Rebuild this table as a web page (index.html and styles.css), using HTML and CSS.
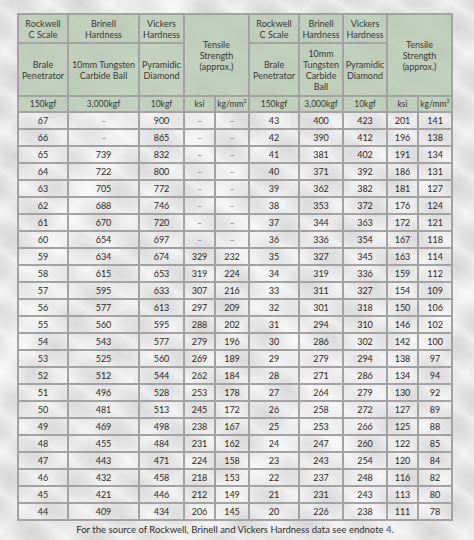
FILE: index.html
```html
<!DOCTYPE html>
<html>
<head>
<meta charset="utf-8">
<link rel="stylesheet" href="styles.css">
</head>
<body>
<div class="page">
<table class="hard">
<colgroup>
<col class="c-rc"><col class="c-br"><col class="c-vk"><col class="c-ksi"><col class="c-kg">
<col class="c-rc"><col class="c-br2"><col class="c-vk2"><col class="c-ksi"><col class="c-kg">
</colgroup>
<thead>
<tr class="h1">
<th>Rockwell<br>C Scale</th><th>Brinell<br>Hardness</th><th>Vickers<br>Hardness</th><th colspan="2" rowspan="2">Tensile<br>Strength<br>(approx.)</th>
<th>Rockwell<br>C Scale</th><th>Brinell<br>Hardness</th><th>Vickers<br>Hardness</th><th colspan="2" rowspan="2">Tensile<br>Strength<br>(approx.)</th>
</tr>
<tr class="h2">
<th>Brale<br>Penetrator</th><th>10mm Tungsten<br>Carbide Ball</th><th>Pyramidic<br>Diamond</th>
<th>Brale<br>Penetrator</th><th>10mm<br>Tungsten<br>Carbide<br>Ball</th><th>Pyramidic<br>Diamond</th>
</tr>
<tr class="h3">
<th>150kgf</th><th>3,000kgf</th><th>10kgf</th><th>ksi</th><th>kg/mm<sup>2</sup></th>
<th>150kgf</th><th>3,000kgf</th><th>10kgf</th><th>ksi</th><th>kg/mm<sup>2</sup></th>
</tr>
</thead>
<tbody>
<tr><td>67</td><td class="d">–</td><td>900</td><td class="d">–</td><td class="d">–</td><td>43</td><td>400</td><td>423</td><td>201</td><td>141</td></tr>
<tr><td>66</td><td class="d">–</td><td>865</td><td class="d">–</td><td class="d">–</td><td>42</td><td>390</td><td>412</td><td>196</td><td>138</td></tr>
<tr><td>65</td><td>739</td><td>832</td><td class="d">–</td><td class="d">–</td><td>41</td><td>381</td><td>402</td><td>191</td><td>134</td></tr>
<tr><td>64</td><td>722</td><td>800</td><td class="d">–</td><td class="d">–</td><td>40</td><td>371</td><td>392</td><td>186</td><td>131</td></tr>
<tr><td>63</td><td>705</td><td>772</td><td class="d">–</td><td class="d">–</td><td>39</td><td>362</td><td>382</td><td>181</td><td>127</td></tr>
<tr><td>62</td><td>688</td><td>746</td><td class="d">–</td><td class="d">–</td><td>38</td><td>353</td><td>372</td><td>176</td><td>124</td></tr>
<tr><td>61</td><td>670</td><td>720</td><td class="d">–</td><td class="d">–</td><td>37</td><td>344</td><td>363</td><td>172</td><td>121</td></tr>
<tr><td>60</td><td>654</td><td>697</td><td class="d">–</td><td class="d">–</td><td>36</td><td>336</td><td>354</td><td>167</td><td>118</td></tr>
<tr><td>59</td><td>634</td><td>674</td><td>329</td><td>232</td><td>35</td><td>327</td><td>345</td><td>163</td><td>114</td></tr>
<tr><td>58</td><td>615</td><td>653</td><td>319</td><td>224</td><td>34</td><td>319</td><td>336</td><td>159</td><td>112</td></tr>
<tr><td>57</td><td>595</td><td>633</td><td>307</td><td>216</td><td>33</td><td>311</td><td>327</td><td>154</td><td>109</td></tr>
<tr><td>56</td><td>577</td><td>613</td><td>297</td><td>209</td><td>32</td><td>301</td><td>318</td><td>150</td><td>106</td></tr>
<tr><td>55</td><td>560</td><td>595</td><td>288</td><td>202</td><td>31</td><td>294</td><td>310</td><td>146</td><td>102</td></tr>
<tr><td>54</td><td>543</td><td>577</td><td>279</td><td>196</td><td>30</td><td>286</td><td>302</td><td>142</td><td>100</td></tr>
<tr><td>53</td><td>525</td><td>560</td><td>269</td><td>189</td><td>29</td><td>279</td><td>294</td><td>138</td><td>97</td></tr>
<tr><td>52</td><td>512</td><td>544</td><td>262</td><td>184</td><td>28</td><td>271</td><td>286</td><td>134</td><td>94</td></tr>
<tr><td>51</td><td>496</td><td>528</td><td>253</td><td>178</td><td>27</td><td>264</td><td>279</td><td>130</td><td>92</td></tr>
<tr><td>50</td><td>481</td><td>513</td><td>245</td><td>172</td><td>26</td><td>258</td><td>272</td><td>127</td><td>89</td></tr>
<tr><td>49</td><td>469</td><td>498</td><td>238</td><td>167</td><td>25</td><td>253</td><td>266</td><td>125</td><td>88</td></tr>
<tr><td>48</td><td>455</td><td>484</td><td>231</td><td>162</td><td>24</td><td>247</td><td>260</td><td>122</td><td>85</td></tr>
<tr><td>47</td><td>443</td><td>471</td><td>224</td><td>158</td><td>23</td><td>243</td><td>254</td><td>120</td><td>84</td></tr>
<tr><td>46</td><td>432</td><td>458</td><td>218</td><td>153</td><td>22</td><td>237</td><td>248</td><td>116</td><td>82</td></tr>
<tr><td>45</td><td>421</td><td>446</td><td>212</td><td>149</td><td>21</td><td>231</td><td>243</td><td>113</td><td>80</td></tr>
<tr><td>44</td><td>409</td><td>434</td><td>206</td><td>145</td><td>20</td><td>226</td><td>238</td><td>111</td><td>78</td></tr>
</tbody>
</table>
<p class="note">For the source of Rockwell, Brinell and Vickers Hardness data see endnote <a class="ref" href="#n4">4</a>.</p>
</div>
</body>
</html>
```

FILE: styles.css
```css
html, body {
  margin: 0;
  padding: 0;
}
body {
  width: 474px;
  height: 540px;
  overflow: hidden;
  font-family: Lato, "Open Sans", sans-serif;
  color: #2e2e2e;
  background-color: #e5e5e5;
  background-image:
    linear-gradient(115deg, rgba(255,255,255,0) 20%, rgba(255,255,255,0.5) 24%, rgba(255,255,255,0) 28%),
    linear-gradient(65deg, rgba(255,255,255,0) 50%, rgba(255,255,255,0.45) 53%, rgba(255,255,255,0) 57%),
    linear-gradient(140deg, rgba(255,255,255,0) 70%, rgba(255,255,255,0.4) 73%, rgba(255,255,255,0) 77%),
    repeating-linear-gradient(35deg, rgba(255,255,255,0) 0, rgba(255,255,255,0.4) 7px, rgba(255,255,255,0) 14px, rgba(0,0,0,0.03) 24px, rgba(255,255,255,0) 33px),
    repeating-linear-gradient(-50deg, rgba(255,255,255,0) 0, rgba(255,255,255,0.35) 11px, rgba(255,255,255,0) 22px, rgba(0,0,0,0.03) 37px, rgba(255,255,255,0) 51px);
}
.page {
  padding: 13px 0 0 17px;
}
.hard {
  border-collapse: collapse;
  table-layout: fixed;
  width: 436px;
}
.c-rc { width: 50px; }
.c-br { width: 71px; }
.c-vk { width: 45px; }
.c-ksi { width: 31px; }
.c-kg { width: 34px; }
.c-br2 { width: 44px; }
.c-vk2 { width: 44px; }
.hard th,
.hard td {
  border: 2px solid #a3a3a3;
  padding: 0;
  text-align: center;
  vertical-align: middle;
  white-space: nowrap;
}
.hard th {
  background: rgba(182, 200, 178, 0.8);
  font-weight: normal;
  font-size: 9px;
  line-height: 11px;
  color: #3a3a3a;
}
.h1 { height: 29px; }
.h2 { height: 53px; }
.h3 { height: 16px; }
.h3 th { font-size: 8.5px; }
.hard sup {
  font-size: 5.5px;
  line-height: 0;
  vertical-align: 4px;
}
.hard td {
  height: 15px;
  font-size: 9px;
  line-height: 13px;
  color: #2a2a2a;
  background: rgba(255, 255, 255, 0.1);
}
.hard tbody tr { height: 17px; }
.hard td.d { color: #8c8c8c; }
.note {
  margin: 3px 0 0 0;
  width: 436px;
  text-align: center;
  font-size: 9.5px;
  line-height: 12px;
  color: #2e2e2e;
}
.ref {
  color: #3a3ad0;
  text-decoration: none;
}
```
